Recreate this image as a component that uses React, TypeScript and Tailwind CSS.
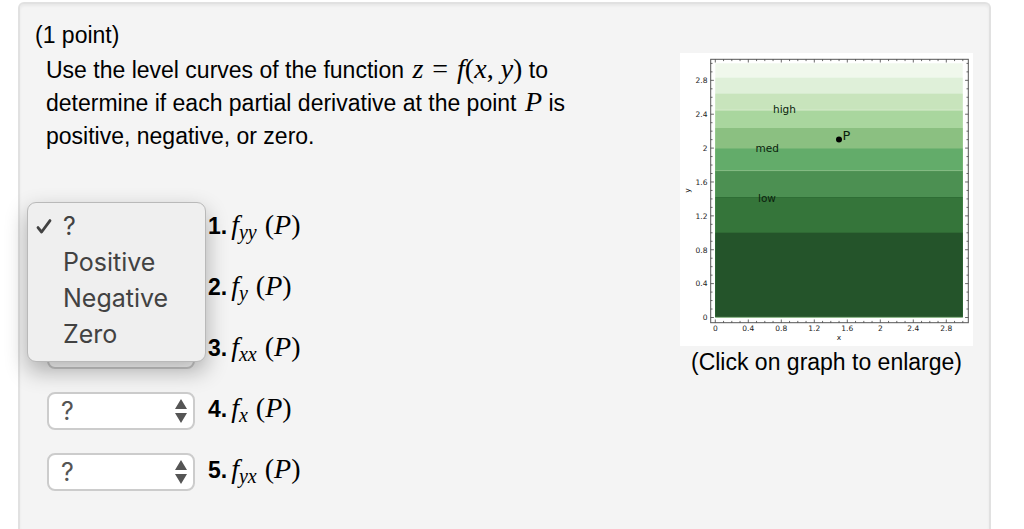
import { useState, type ReactNode } from 'react';
import clsx from 'clsx';

const CHOICES = ['?', 'Positive', 'Negative', 'Zero'];

const QUESTIONS = ['yy', 'y', 'xx', 'x', 'yx'];

const BANDS = [
  { top: 10.3, fill: '#f0f8ec' },
  { top: 24.7, fill: '#dff0d9' },
  { top: 40.7, fill: '#c8e4bc' },
  { top: 57.5, fill: '#a9d69e' },
  { top: 75, fill: '#8bc081' },
  { top: 95.5, fill: '#63ac6a' },
  { top: 117.7, fill: '#4c9052' },
  { top: 144.3, fill: '#35753a' },
  { top: 179.7, fill: '#24542a' },
];

const TICKS = Array.from({ length: 31 }, (_, i) => i);
const LABELS = ['0', '0.4', '0.8', '1.2', '1.6', '2', '2.4', '2.8'];

const xAt = (tenths: number) => 35.3 + tenths * 8.25;
const yAt = (tenths: number) => 264.5 - tenths * 8.47;

function MathText({ children }: { children: ReactNode }) {
  return (
    <span className="font-['Liberation_Serif',serif] text-[28px] leading-none whitespace-nowrap">
      {children}
    </span>
  );
}

function Term({ sub }: { sub: string }) {
  return (
    <MathText>
      <i>f</i>
      <sub className="-bottom-[5px] mr-2 text-[20px] leading-none italic">{sub}</sub>
      (<i>P</i>)
    </MathText>
  );
}

function LevelCurves() {
  return (
    <svg
      viewBox="0 0 293 293"
      className="block w-full"
      role="img"
      aria-label="Level curves"
      fontFamily="'DejaVu Sans', sans-serif"
    >
      <rect width="293" height="293" fill="#fff" />
      {BANDS.map((b) => (
        <rect key={b.top} x="35.3" width="247.4" y={b.top} height={264.2 - b.top} fill={b.fill} />
      ))}
      <g stroke="#c8e4bc" strokeWidth="0.8" opacity="0.5">
        <path d="M35.3 57H282.7" stroke="#e6f5df" />
        <path d="M35.3 117.6H282.7" />
        <path d="M35.3 264.3H282.7" />
        <path d="M35.3 144.5H282.7" stroke="#1d5a26" />
      </g>
      <rect x="30.7" y="6.3" width="257.6" height="263.4" fill="none" stroke="#555" strokeWidth="1" />
      <g stroke="#444" strokeWidth="0.8">
        {TICKS.map((t) => {
          const len = t % 4 === 0 ? 3.2 : 1.8;
          return (
            <path
              key={t}
              d={`M${xAt(t)} 6.3v${len}M${xAt(t)} 269.7v${-len}M30.7 ${yAt(t)}h${len}M288.3 ${yAt(t)}h${-len}`}
            />
          );
        })}
      </g>
      <g fontSize="7.5" fill="#222">
        {LABELS.map((l, i) => (
          <text key={l} x={xAt(i * 4)} y="278" textAnchor="middle">
            {l}
          </text>
        ))}
        {LABELS.map((l, i) => (
          <text key={l} x="27.5" y={yAt(i * 4) + 2.8} textAnchor="end">
            {l}
          </text>
        ))}
        <text x="159" y="286.5" textAnchor="middle">
          x
        </text>
        <text transform="translate(9.5 137.5) rotate(-90)" textAnchor="middle">
          y
        </text>
      </g>
      <g fontSize="10.5" fill="#0b1f0d">
        <text x="93" y="60">
          high
        </text>
        <text x="75.5" y="99">
          med
        </text>
        <text x="78" y="148.5">
          low
        </text>
        <text x="162.5" y="87" fontSize="13">
          P
        </text>
      </g>
      <circle cx="159" cy="86.6" r="3" fill="#000" />
    </svg>
  );
}

export default function App() {
  const [answers, setAnswers] = useState<string[]>(QUESTIONS.map(() => '?'));
  const [open, setOpen] = useState(true);

  const setAnswer = (index: number, value: string) =>
    setAnswers((prev) => prev.map((a, i) => (i === index ? value : a)));

  return (
    <div className="flex min-h-screen bg-white pt-0.5 pr-[33px] pl-[18px] font-['Liberation_Sans',Arial,sans-serif] text-[23px] leading-[33px] text-black">
      <main className="flex-1 rounded-t-md border-2 border-b-0 border-[#e1e1e1] bg-[#f4f4f4] pt-[15px] pr-4 pl-[15px] shadow-[inset_0_2px_3px_rgba(0,0,0,0.05)]">
        <p className="mb-0.5 leading-8">(1 point)</p>
        <div className="flex items-start justify-between pl-[11px]">
          <section className="max-w-[540px] flex-1 pt-px">
            <p>
              Use the level curves of the function{' '}
              <MathText>
                <i className="ml-0.5">z</i> <span className="mx-0.5">=</span> <i>f</i>(<i>x</i>,{' '}
                <i>y</i>)
              </MathText>{' '}
              to determine if each partial derivative at the point{' '}
              <MathText>
                <i className="ml-0.5">P</i>
              </MathText>{' '}
              is positive, negative, or zero.
            </p>
            <ol className="mt-14 flex flex-col gap-[23px] pl-px">
              {QUESTIONS.map((sub, i) => (
                <li key={sub} className="relative flex h-[38px] items-center gap-[13px]">
                  <div className="relative">
                    <select
                      id={`answer-${sub}`}
                      value={answers[i]}
                      onChange={(e) => setAnswer(i, e.target.value)}
                      className="block h-[38px] w-[148px] appearance-none rounded-lg border-2 border-[#cccccc] bg-white pl-3 font-['Inter',sans-serif] text-[25px] leading-[34px] text-[#555]"
                    >
                      {CHOICES.map((c) => (
                        <option key={c}>{c}</option>
                      ))}
                    </select>
                    <svg
                      viewBox="0 0 12 24"
                      className="pointer-events-none absolute top-[7px] right-2 h-6 w-3"
                      fill="#555"
                      aria-hidden="true"
                    >
                      <path d="M6 0l6 10H0zM6 24l6-10H0z" />
                    </svg>
                  </div>
                  <label
                    htmlFor={`answer-${sub}`}
                    className="flex items-baseline gap-1 pb-[3px] whitespace-nowrap"
                  >
                    <b>{i + 1}.</b>
                    <Term sub={sub} />
                  </label>
                  {i === 0 && open && (
                    <div
                      role="listbox"
                      aria-label="Answer"
                      className="absolute -top-[7px] -left-5 z-10 flex w-[179px] flex-col rounded-[9px] border border-[#b9b9b9] bg-[#efefef] pt-[5px] pb-[9px] font-['Inter',sans-serif] text-[25px] leading-9 text-[#424242] shadow-[0_9px_22px_rgba(0,0,0,0.3)]"
                    >
                      {CHOICES.map((c) => (
                        <button
                          key={c}
                          type="button"
                          role="option"
                          aria-selected={answers[0] === c}
                          onClick={() => {
                            setAnswer(0, c);
                            setOpen(false);
                          }}
                          className="flex items-center gap-[11px] pl-2 text-left"
                        >
                          <svg
                            viewBox="0 0 16 16"
                            className={clsx('size-4', answers[0] !== c && 'invisible')}
                            fill="none"
                            stroke="#424242"
                            strokeWidth="2.8"
                            strokeLinecap="round"
                            strokeLinejoin="round"
                            aria-hidden="true"
                          >
                            <path d="M2 9.6L5.6 14L14 2.6" />
                          </svg>
                          {c}
                        </button>
                      ))}
                    </div>
                  )}
                </li>
              ))}
            </ol>
          </section>
          <figure className="w-[293px] shrink-0 text-center">
            <a href="#graph">
              <LevelCurves />
            </a>
            <figcaption>(Click on graph to enlarge)</figcaption>
          </figure>
        </div>
      </main>
    </div>
  );
}
